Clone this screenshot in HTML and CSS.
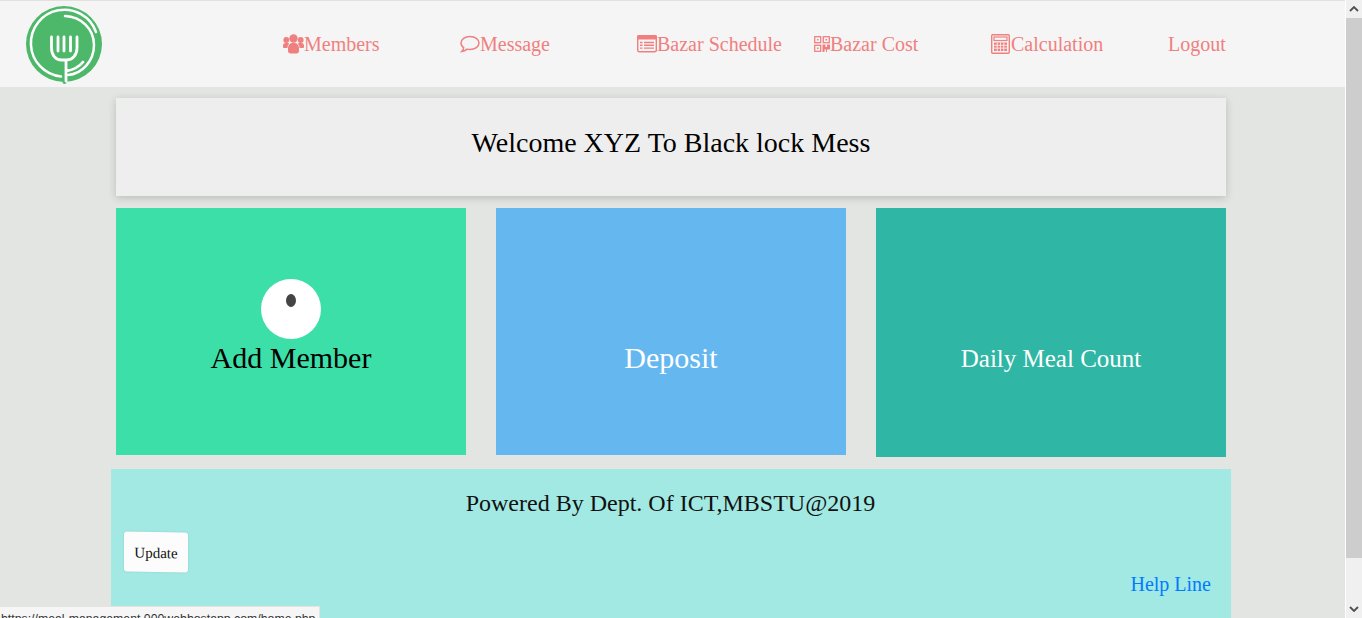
FILE: index.html
```html
<!DOCTYPE html>
<html lang="en">
<head>
<meta charset="utf-8">
<title>Black lock Mess</title>
<link rel="stylesheet" href="styles.css">
</head>
<body>
<div class="window">
  <div class="page">
    <header class="header">
      <a class="logo" href="#">
        <svg width="78" height="78" viewBox="0 0 78 78">
          <circle cx="39" cy="38" r="38" fill="#4db86a"/>
          <rect x="37.500" y="70" width="4" height="8" rx="2" fill="#4db86a"/>
          <path d="M36 70.500A33.500 33.500 0 1 1 71 26" fill="none" stroke="#fff" stroke-width="2.500" stroke-linecap="round"/>
          <path d="M40 10c16 .5 29 13 29 29 0 16-12 29-26 30" fill="none" stroke="#fff" stroke-width="2.500" stroke-linecap="round"/>
          <path d="M26.500 31v11c0 7 4 12 10 12h5c6 0 10.500-5 10.500-12V31M33 31v14M39 31v14M45.500 31v14M41 54v21M41 65c7-1 13-4 17-9" fill="none" stroke="#fff" stroke-width="2.800" stroke-linecap="round"/>
        </svg>
      </a>
      <nav class="nav">
        <a class="nav-link" href="#">
          <svg class="icon" width="21" height="20" viewBox="0 0 21 20" fill="#f08080"><circle cx="3.300" cy="6" r="2.900"/><circle cx="17.700" cy="6" r="2.900"/><circle cx="10.500" cy="4.500" r="4.200"/><path d="M0 11.500C0 10 1 9 2.500 9H5c.7 0 1 .3 1 1-1 1-1.500 2.500-1.500 4H1c-.6 0-1-.5-1-1zM21 11.500C21 10 20 9 18.500 9H16c-.7 0-1 .3-1 1 1 1 1.500 2.500 1.500 4H20c.6 0 1-.5 1-1z"/><path d="M5 14c0-3 2-5 4.500-5h2c2.500 0 4.500 2 4.500 5v3c0 1.500-1 2.500-2.500 2.500h-6C6 19.500 5 18.500 5 17z"/></svg>Members
        </a>
        <a class="nav-link" href="#">
          <svg class="icon" width="20" height="18" viewBox="0 0 20 18" fill="none" stroke="#f08080" stroke-width="1.500"><path d="M10 1.500c5 0 9 2.900 9 6.500s-4 6.500-9 6.500c-1 0-2-.1-2.900-.4C5.800 15.300 3.800 16.300 1.800 16.500c1.200-1.300 1.900-2.500 2-3.700C2 11.600 1 9.900 1 8c0-3.600 4-6.500 9-6.500z"/></svg>Message
        </a>
        <a class="nav-link" href="#">
          <svg class="icon" width="20" height="18" viewBox="0 0 20 18"><rect x=".7" y=".7" width="18.600" height="16.100" rx="1.500" fill="none" stroke="#f08080" stroke-width="1.400"/><rect x="0" y="0" width="20" height="4.500" rx="1.500" fill="#f08080"/><path d="M3 7.500h2.500M7 7.500h10M3 10.300h2.500M7 10.300h10M3 13.100h2.500M7 13.100h10" stroke="#f08080" stroke-width="1.400"/></svg>Bazar Schedule
        </a>
        <a class="nav-link" href="#">
          <svg class="icon" width="16" height="16" viewBox="0 0 16 16" fill="none" stroke="#f08080" stroke-width="1.300"><rect x=".7" y=".7" width="6" height="6"/><rect x="9.300" y=".7" width="6" height="6"/><rect x=".7" y="9.300" width="6" height="6"/><path d="M2.900 2.900h1.600v1.600H2.900zM11.500 2.900h1.600v1.600h-1.600zM2.900 11.500h1.600v1.600H2.900z" fill="#f08080" stroke="none"/><path d="M8.500 8.500h3v2.500h1.500V8.500H16v5h-3V16h-1v-2.500h-1.500V16h-2z" fill="#f08080" stroke="none"/></svg>Bazar Cost
        </a>
        <a class="nav-link" href="#">
          <svg class="icon" width="20" height="20" viewBox="0 0 20 20"><rect x=".7" y=".7" width="17.600" height="18.600" rx="1" fill="none" stroke="#f08080" stroke-width="1.400"/><rect x="3" y="3" width="13" height="3.500" fill="none" stroke="#f08080" stroke-width="1.200"/><path d="M3 8.500h13v8.500H3z" fill="#f08080"/><path d="M6.200 8.500V17M9.500 8.500V17M12.800 8.500V17M3 11.300h13M3 14.100h13" stroke="#faf0f0" stroke-width=".9"/></svg>Calculation
        </a>
        <a class="nav-link logout" href="#">Logout</a>
      </nav>
    </header>
    <main class="content">
      <section class="welcome">
        <h1 class="welcome-title">Welcome XYZ To Black lock Mess</h1>
      </section>
      <section class="cards">
        <a class="card card-add" href="#">
          <span class="avatar"><span class="avatar-dot"></span></span>
          <span class="card-label dark">Add Member</span>
        </a>
        <a class="card card-deposit" href="#"><span class="card-label">Deposit</span></a>
        <a class="card card-meal" href="#"><span class="card-label small">Daily Meal Count</span></a>
      </section>
      <footer class="footer">
        <p class="powered">Powered By Dept. Of ICT,MBSTU@2019</p>
        <div class="update-row"><a class="update" href="#">Update</a></div>
        <div class="help-row"><a class="help" href="#">Help Line</a></div>
      </footer>
    </main>
  </div>
  <div class="scrollbar">
    <span class="arrow"><svg width="10" height="6" viewBox="0 0 10 6"><path d="M1 5l4-4 4 4" fill="none" stroke="#505050" stroke-width="1.800"/></svg></span>
    <div class="thumb"></div>
    <div class="track"></div>
    <span class="arrow"><svg width="10" height="6" viewBox="0 0 10 6"><path d="M1 1l4 4 4-4" fill="none" stroke="#505050" stroke-width="1.800"/></svg></span>
  </div>
  <div class="status">https://meal-management.000webhostapp.com/home.php</div>
</div>
</body>
</html>
```

FILE: styles.css
```css
* { box-sizing: border-box; }
html, body { margin: 0; height: 100%; overflow: hidden; }
body { font-family: "Liberation Serif", "Times New Roman", serif; background: #e3e5e3; }
a { text-decoration: none; }

.window { display: flex; height: 618px; width: 1362px; overflow: hidden; position: relative; }
.page { width: 1345px; flex: none; display: flex; flex-direction: column; }

.header { height: 87px; flex: none; background: #f5f5f5; border-top: 1px solid #e0e0e0; display: flex; align-items: flex-start; }
.logo { display: block; margin: 5px 0 0 25px; width: 78px; height: 78px; flex: none; }
.nav { display: grid; grid-template-columns: repeat(5, 177px) 58px; margin-left: 180px; height: 86px; align-items: center; }
.nav-link { display: flex; align-items: center; color: #f08080; font-size: 20px; line-height: 24px; white-space: nowrap; }
.icon { flex: none; }

.content { flex: 1; display: flex; flex-direction: column; align-items: center; padding: 11px 3px 0 0; }
.welcome { width: 1110px; height: 98px; background: #eee; box-shadow: 0 2px 8px rgba(0, 0, 0, .18); display: flex; justify-content: center; padding-top: 27px; flex: none; }
.welcome-title { margin: 0; font-size: 28px; font-weight: 400; line-height: 36px; color: #000; }

.cards { width: 1110px; display: flex; gap: 30px; margin-top: 12px; align-items: flex-start; flex: none; }
.card { width: 350px; height: 247px; position: relative; display: flex; flex-direction: column; align-items: center; padding-top: 133px; }
.card-add { background: #3ddfa9; }
.card-deposit { background: #65b7f0; }
.card-meal { background: #2fb6a4; height: 249px; }
.card-label { font-size: 30px; line-height: 34px; color: #fff; }
.card-label.dark { color: #000; }
.card-label.small { font-size: 25px; line-height: 36px; }
.avatar { position: absolute; top: 71px; left: 145px; width: 60px; height: 60px; border-radius: 50%; background: #fff; }
.avatar-dot { position: absolute; left: 25px; top: 15px; width: 10px; height: 13px; border-radius: 50%; background: #444; }

.footer { width: 1120px; flex: 1; margin-top: 12px; background: #a2e9e3; display: flex; flex-direction: column; padding: 0 20px 0 12px; }
.powered { margin: 19px 0 0; font-size: 24px; line-height: 30px; color: #111; text-align: center; padding-left: 7px; }
.update-row { margin-top: 14px; display: flex; padding-left: 1px; }
.update { display: block; width: 64px; height: 40px; background: #fcfcfc; border-radius: 3px; color: #111; font-size: 15px; line-height: 42px; text-align: center; box-shadow: 0 0 2px rgba(0, 0, 0, .15); transform: skewY(1deg); }
.help-row { display: flex; justify-content: flex-end; margin-top: 0; }
.help { color: #007bff; font-size: 20px; line-height: 24px; }

.scrollbar { width: 17px; flex: none; background: #f0f0f0; display: flex; flex-direction: column; border-left: 1px solid #fff; }
.arrow { height: 18px; display: flex; align-items: center; justify-content: center; flex: none; }
.thumb { height: 540px; background: #cdcdcd; flex: none; }
.track { flex: 1; }

.status { position: absolute; left: 0; bottom: 0; width: 320px; height: 12px; background: #f6f6f6; border: 1px solid #e4e4e4; border-bottom: 0; border-left: 0; font-family: "Liberation Sans", Arial, sans-serif; font-size: 12.300px; line-height: 16px; color: #333; padding: 4px 0 0 1px; white-space: nowrap; overflow: hidden; }
```
